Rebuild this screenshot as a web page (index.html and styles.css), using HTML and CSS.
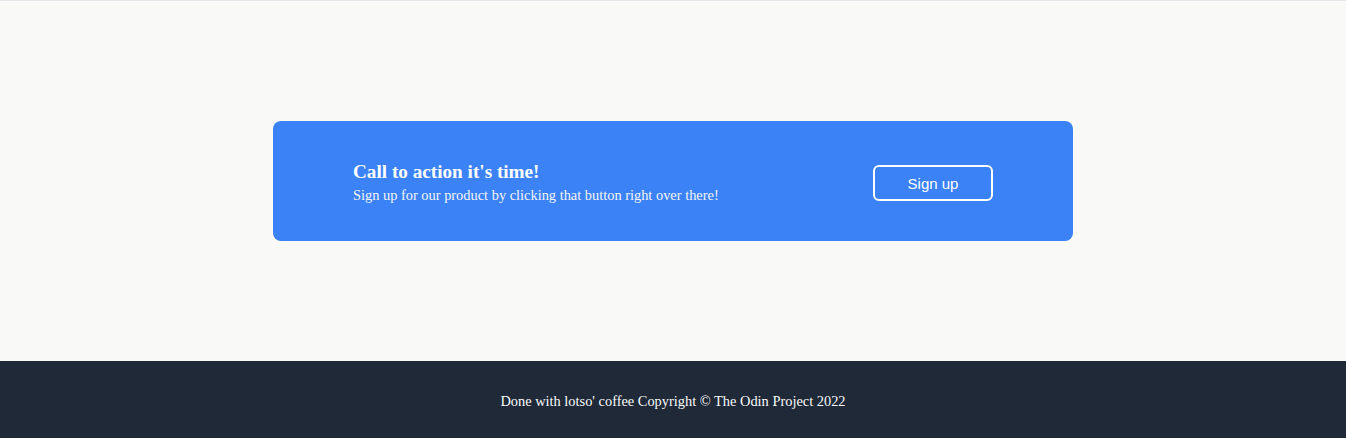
FILE: index.html
```html
<!DOCTYPE html>
<html lang="en">
<head>
    <meta charset="UTF-8">
    <meta name="viewport" content="width=device-width, initial-scale=1.0">
    <title>Call to action</title>
    <link rel="stylesheet" href="styles.css">
</head>
<body>
    <section class="cta-section">
        <div class="cta-box">
            <div class="cta-text">
                <h2 class="cta-title">Call to action it's time!</h2>
                <p class="cta-subtitle">Sign up for our product by clicking that button right over there!</p>
            </div>
            <button class="cta-button">Sign up</button>
        </div>
    </section>

    <footer class="footer">
        Done with lotso' coffee Copyright &copy; The Odin Project 2022
    </footer>
</body>
</html>
```

FILE: styles.css
```css
body {
    margin: 0;
    font-family: "Liberation Serif", "Times New Roman", serif;
    background: #f9faf8;
    border-top: 1px solid #e5e7eb;
}
.cta-section {
    height: 360px;
    display: flex;
    align-items: center;
    justify-content: center;
}
.cta-box {
    width: 800px;
    height: 120px;
    box-sizing: border-box;
    padding: 4px 80px 0;
    background: #3b82f6;
    border-radius: 8px;
    display: flex;
    align-items: center;
    justify-content: space-between;
    color: white;
}
.cta-title {
    margin: 0;
    font-size: 1.2rem;
    font-weight: bold;
    line-height: 22px;
}
.cta-subtitle {
    margin: 2px 0 0;
    font-size: 0.9rem;
    line-height: 20px;
    color: #f3f4f6;
}
.cta-button {
    width: 120px;
    height: 36px;
    background: none;
    border: 2px solid white;
    border-radius: 6px;
    color: white;
    font-family: "Liberation Sans", Arial, sans-serif;
    font-size: 15px;
    cursor: pointer;
}
.footer {
    height: 77px;
    background: #1f2937;
    color: #f9fafb;
    font-size: 0.9rem;
    display: flex;
    align-items: center;
    justify-content: center;
    padding-top: 4px;
    box-sizing: border-box;
}
```
